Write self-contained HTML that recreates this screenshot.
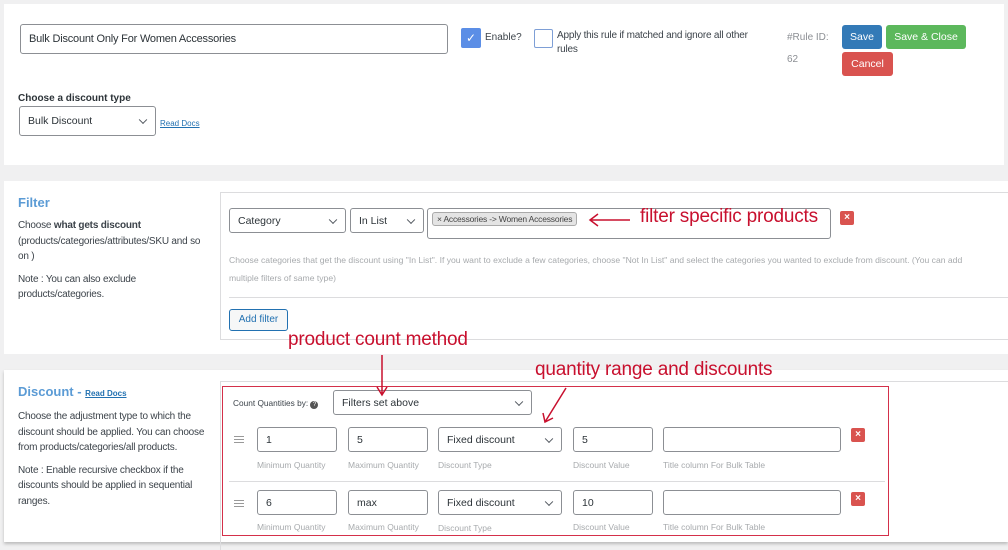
<!DOCTYPE html>
<html><head><meta charset="utf-8"><style>
*{box-sizing:border-box;margin:0;padding:0}
html,body{width:1008px;height:550px;overflow:hidden}
body{background:#f0f0f1;font-family:"Liberation Sans",sans-serif;font-size:10.5px;color:#3c434a;position:relative}
.a{position:absolute}
.w{background:#fff}
.inp{position:absolute;background:#fff;border:1px solid #8c8f94;border-radius:3px;padding:0 8px;display:flex;align-items:center;font-size:10.5px;color:#2c3338}
.sel:after{content:"";position:absolute;right:9px;top:50%;width:5px;height:5px;border-right:1px solid #50575e;border-bottom:1px solid #50575e;transform:translateY(-70%) rotate(45deg)}
.btn{position:absolute;color:#fff;font-size:10.5px;display:flex;align-items:center;justify-content:center;border-radius:3px}
.lbl{position:absolute;font-size:8.5px;color:#a7aaad}
.x{position:absolute;width:14px;height:14px;background:#d9534f;border-radius:2px;color:#fff;font-size:10px;font-weight:bold;text-align:center;line-height:14px}
.red{position:absolute;color:#c8102e;font-size:19px;white-space:nowrap;letter-spacing:-0.2px}
.help{position:absolute;font-size:10px;line-height:15.5px;color:#3c434a;letter-spacing:-0.2px}
</style></head><body>
<div class="a w" style="left:4px;top:4px;width:1000px;height:161px"></div>
<div class="a w" style="left:4px;top:181px;width:1004px;height:173px"></div>
<div class="a w" style="left:4px;top:370px;width:1004px;height:172px;box-shadow:0 2px 3px #bbb"></div>

<div class="inp" style="left:20px;top:24px;width:428px;height:30px;font-size:11px;letter-spacing:-0.2px">Bulk Discount Only For Women Accessories</div>
<div class="a" style="left:461px;top:28px;width:20px;height:20px;background:#5b8ee6;border-radius:2px;color:#fff;font-size:12px;text-align:center;line-height:20px">✓</div>
<div class="a" style="left:485px;top:32px;font-size:10px">Enable?</div>
<div class="a" style="left:534px;top:29px;width:19px;height:19px;border:1px solid #7e9fd6;border-radius:2px;background:#fff"></div>
<div class="a" style="left:557px;top:29px;font-size:10px;line-height:14px;width:205px;letter-spacing:-0.2px">Apply this rule if matched and ignore all other rules</div>
<div class="a" style="left:787px;top:32px;font-size:10px;color:#8c8f94">#Rule ID:</div>
<div class="a" style="left:787px;top:54px;font-size:10px;color:#8c8f94">62</div>
<div class="btn" style="left:842px;top:25px;width:40px;height:24px;background:#337ab7">Save</div>
<div class="btn" style="left:886px;top:25px;width:80px;height:24px;background:#5cb85c">Save &amp; Close</div>
<div class="btn" style="left:842px;top:52px;width:51px;height:24px;background:#d9534f">Cancel</div>

<div class="a" style="left:18px;top:93px;font-size:10px;font-weight:bold;color:#2c3338">Choose a discount type</div>
<div class="inp sel" style="left:19px;top:106px;width:137px;height:30px">Bulk Discount</div>
<div class="a" style="left:160px;top:119px;font-size:8px;color:#2271b1;text-decoration:underline">Read Docs</div>

<div class="a" style="left:18px;top:195px;font-size:13px;color:#5b9bd5;font-weight:bold">Filter</div>
<div class="help" style="left:18px;top:218px;width:195px">Choose <b>what gets discount</b> (products/categories/attributes/SKU and so on )<div style="height:7px"></div>Note : You can also exclude products/categories.</div>
<div class="a" style="left:220px;top:192px;width:800px;height:148px;border:1px solid #dcdcde;border-right:none"></div>
<div class="inp sel" style="left:229px;top:208px;width:117px;height:25px">Category</div>
<div class="inp sel" style="left:350px;top:208px;width:74px;height:25px">In List</div>
<div class="inp" style="left:427px;top:208px;width:404px;height:31px;align-items:flex-start;padding:3px 4px"><span style="background:#e4e4e4;border:1px solid #aaa;border-radius:3px;padding:1px 4px;font-size:8.5px;color:#444;letter-spacing:-0.2px">× Accessories -&gt; Women Accessories</span></div>
<div class="x" style="left:840px;top:211px">×</div>
<div class="a" style="left:229px;top:251px;font-size:8.6px;color:#a7aaad;line-height:18px;width:779px;white-space:nowrap;overflow:hidden">Choose categories that get the discount using "In List". If you want to exclude a few categories, choose "Not In List" and select the categories you wanted to exclude from discount. (You can add<br>multiple filters of same type)</div>
<div class="a" style="left:229px;top:297px;width:780px;height:1px;background:#dcdcde"></div>
<div class="a" style="left:229px;top:309px;width:59px;height:22px;border:1px solid #2271b1;border-radius:3px;color:#2271b1;font-size:10px;text-align:center;line-height:20px;background:#f6f7f7">Add filter</div>

<div class="a" style="left:18px;top:384px;font-size:13px;color:#5b9bd5;font-weight:bold">Discount - <span style="font-size:8px;color:#2271b1;text-decoration:underline">Read Docs</span></div>
<div class="help" style="left:18px;top:409px;width:200px">Choose the adjustment type to which the discount should be applied. You can choose from products/categories/all products.<div style="height:7px"></div>Note : Enable recursive checkbox if the discounts should be applied in sequential ranges.</div>
<div class="a" style="left:220px;top:381px;width:800px;height:180px;border:1px solid #dcdcde;border-right:none"></div>
<div class="a" style="left:222px;top:386px;width:667px;height:150px;border:1px solid #d4304a"></div>
<div class="a" style="left:233px;top:398px;font-size:8.3px">Count Quantities by: <span style="display:inline-block;width:8px;height:8px;border-radius:50%;background:#555;color:#fff;font-size:6px;text-align:center;line-height:8px">?</span></div>
<div class="inp sel" style="left:333px;top:390px;width:199px;height:25px">Filters set above</div>

<div class="a" style="left:234px;top:436px;width:10px;height:7px;border-top:1px solid #999;border-bottom:1px solid #999"><div style="margin-top:2px;height:1px;background:#999"></div></div>
<div class="inp" style="left:257px;top:427px;width:80px;height:25px">1</div>
<div class="inp" style="left:348px;top:427px;width:80px;height:25px">5</div>
<div class="inp sel" style="left:438px;top:427px;width:124px;height:25px">Fixed discount</div>
<div class="inp" style="left:573px;top:427px;width:80px;height:25px">5</div>
<div class="inp" style="left:663px;top:427px;width:178px;height:25px"></div>
<div class="x" style="left:851px;top:428px">×</div>
<div class="lbl" style="left:257px;top:460px">Minimum Quantity</div>
<div class="lbl" style="left:348px;top:460px">Maximum Quantity</div>
<div class="lbl" style="left:438px;top:460px">Discount Type</div>
<div class="lbl" style="left:573px;top:460px">Discount Value</div>
<div class="lbl" style="left:663px;top:460px">Title column For Bulk Table</div>
<div class="a" style="left:229px;top:481px;width:656px;height:1px;background:#dcdcde"></div>

<div class="a" style="left:234px;top:500px;width:10px;height:7px;border-top:1px solid #999;border-bottom:1px solid #999"><div style="margin-top:2px;height:1px;background:#999"></div></div>
<div class="inp" style="left:257px;top:490px;width:80px;height:25px">6</div>
<div class="inp" style="left:348px;top:490px;width:80px;height:25px">max</div>
<div class="inp sel" style="left:438px;top:490px;width:124px;height:25px">Fixed discount</div>
<div class="inp" style="left:573px;top:490px;width:80px;height:25px">10</div>
<div class="inp" style="left:663px;top:490px;width:178px;height:25px"></div>
<div class="x" style="left:851px;top:492px">×</div>
<div class="lbl" style="left:257px;top:522px">Minimum Quantity</div>
<div class="lbl" style="left:348px;top:522px">Maximum Quantity</div>
<div class="lbl" style="left:438px;top:523px">Discount Type</div>
<div class="lbl" style="left:573px;top:522px">Discount Value</div>
<div class="lbl" style="left:663px;top:522px">Title column For Bulk Table</div>

<div class="red" style="left:640px;top:206px">filter specific products</div>
<div class="red" style="left:288px;top:329px">product count method</div>
<div class="red" style="left:535px;top:359px">quantity range and discounts</div>
<svg class="a" style="left:0;top:0" width="1008" height="550">
<g stroke="#c8102e" stroke-width="1.5" fill="none">
<path d="M590 220 H630 M598 214 L590 220 L598 226"/>
<path d="M382 355 V394 M377 387 L382 395 L387 387"/>
<path d="M566 388 L545 422 M543 413 L545 422 L553 418"/>
</g></svg>
</body></html>
